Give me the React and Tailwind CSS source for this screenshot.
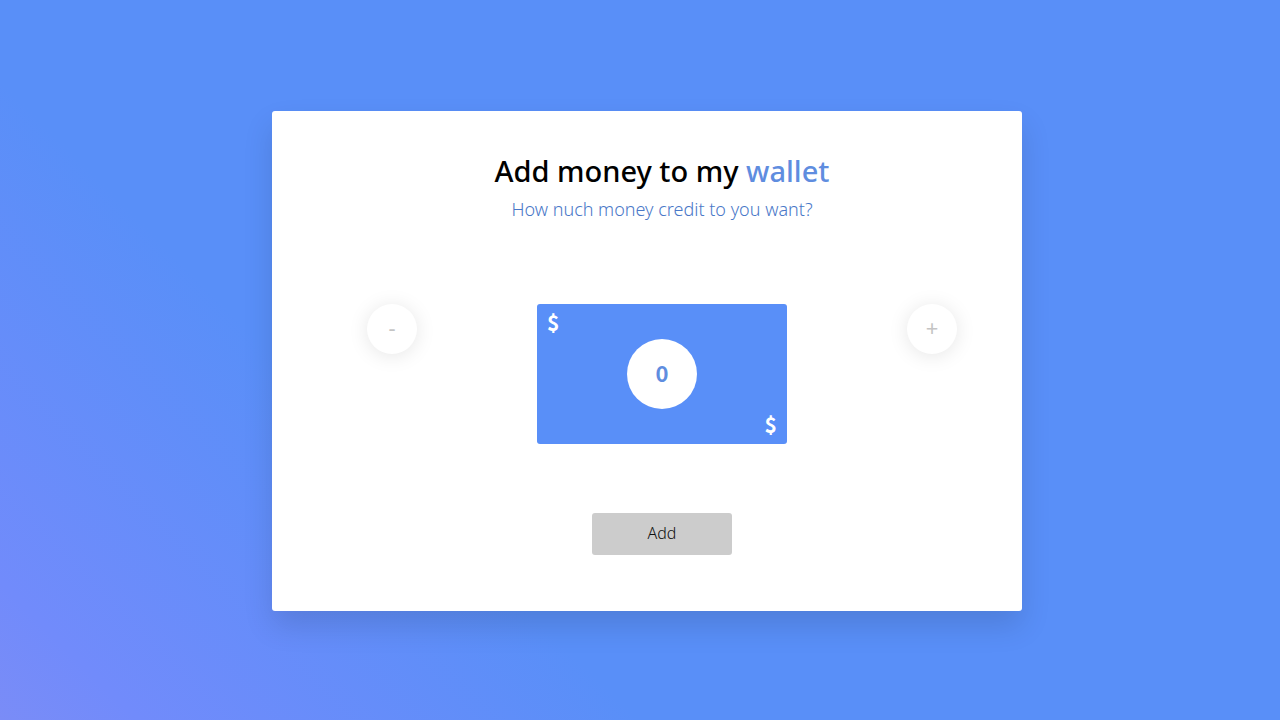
export default function App() {
  return (
    <main className="flex min-h-screen items-center justify-center bg-[linear-gradient(45deg,#7a8cf7_0%,#718bfb_7%,#598ff8_32%,#598ff8_100%)] pt-[111px] pb-[109px] pl-[14px] font-['Noto_Sans',sans-serif]">
      <section className="flex w-full max-w-[750px] flex-col items-center rounded-[3px] bg-white pt-10 pb-14 pl-[30px] shadow-[0_15px_30px_rgba(0,0,0,0.12)]">
        <h1 className="text-[29px] leading-10 font-medium text-black">
          Add money to my <span className="text-[#5f8ddf]">wallet</span>
        </h1>
        <p className="mt-1 text-[18px] leading-7 font-light text-[#4a78c8]">How nuch money credit to you want?</p>
        <div className="mt-[81px] flex w-full items-start justify-between px-[65px]">
          <button type="button" aria-label="Decrease amount" className="size-[50px] rounded-full bg-white pb-1 text-[22px] text-[#c4c4c4] shadow-[0_2px_20px_rgba(0,0,0,0.1)]">-</button>
          <div className="flex h-[140px] w-[250px] justify-between rounded-[3px] bg-[#598ff8] px-[10px] py-1 font-['Noto_Sans_CJK_JP',sans-serif] text-[21px] leading-7 font-bold text-white">
            <span>$</span>
            <output className="flex size-[70px] items-center justify-center self-center rounded-full bg-white pb-1 text-[22px] text-[#5f8ddf]">0</output>
            <span className="self-end pb-0.5">$</span>
          </div>
          <button type="button" aria-label="Increase amount" className="size-[50px] rounded-full bg-white pb-1 text-[22px] text-[#c4c4c4] shadow-[0_2px_20px_rgba(0,0,0,0.1)]">+</button>
        </div>
        <button type="button" className="mt-[69px] h-[42px] w-[140px] rounded-[3px] bg-[#cccccc] pb-0.5 text-[16px] font-light text-[#111111]">Add</button>
      </section>
    </main>
  );
}
